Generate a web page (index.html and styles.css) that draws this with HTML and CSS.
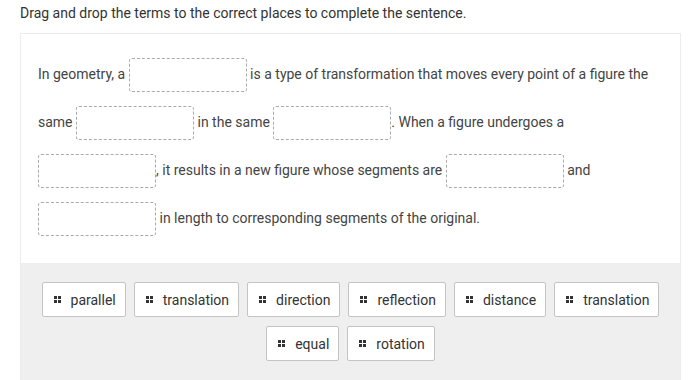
FILE: index.html
```html
<!DOCTYPE html>
<html lang="en">
<head>
  <meta charset="UTF-8" />
  <title>Drag and drop</title>
  <link rel="stylesheet" href="styles.css">
</head>
<body>
  <div class="question">
    <p class="prompt">Drag and drop the terms to the correct places to complete the sentence.</p>

    <div class="panel">
      <!-- Sentence with drop zones -->
      <p class="sentence">In geometry, a <span class="drop"></span> is a type of transformation that moves every point of a figure the same <span class="drop"></span> in the same <span class="drop"></span>. When a figure undergoes a <span class="drop"></span>, it results in a new figure whose segments are <span class="drop"></span> and <span class="drop"></span> in length to corresponding segments of the original.</p>

      <!-- Term bank -->
      <div class="bank">
        <div class="chip"><span class="grip"></span>parallel</div>
        <div class="chip"><span class="grip"></span>translation</div>
        <div class="chip"><span class="grip"></span>direction</div>
        <div class="chip"><span class="grip"></span>reflection</div>
        <div class="chip"><span class="grip"></span>distance</div>
        <div class="chip"><span class="grip"></span>translation</div>
        <div class="chip"><span class="grip"></span>equal</div>
        <div class="chip"><span class="grip"></span>rotation</div>
      </div>
    </div>
  </div>
</body>
</html>
```

FILE: styles.css
```css
body, html {
  margin: 0; padding: 0;
  font-family: 'Roboto', 'Liberation Sans', sans-serif;
  font-size: 14px;
  background: #fff;
  color: #333;
  overflow: hidden;
}
.question {
  margin-left: 20px;
  width: 661px;
}
.prompt {
  margin: 0;
  padding-top: 4px;
  line-height: 18px;
  height: 29px;
}
.panel {
  border: 1px solid #ececec;
  border-bottom: none;
}
.sentence {
  margin: 0;
  padding: 16px 17px 21px 17px;
  line-height: 48px;
  color: #444;
}
.drop {
  display: inline-block;
  width: 116px;
  height: 32px;
  border: 1px dashed #aaa;
  border-radius: 3px;
  vertical-align: middle;
  box-sizing: content-box;
}
.bank {
  background: #efefef;
  padding: 19px 10px 30px;
  display: flex;
  flex-wrap: wrap;
  justify-content: center;
  gap: 9px 8px;
}
.chip {
  display: flex;
  align-items: center;
  height: 33px;
  padding: 0 9px 0 11px;
  background: #fff;
  border: 1px solid #c4c4c4;
  border-radius: 2px;
  color: #333;
  cursor: move;
  user-select: none;
}
.grip {
  width: 7px;
  height: 7px;
  margin-right: 10px;
  background:
    linear-gradient(#333, #333) 0 0 / 3px 3px no-repeat,
    linear-gradient(#333, #333) 100% 0 / 3px 3px no-repeat,
    linear-gradient(#333, #333) 0 100% / 3px 3px no-repeat,
    linear-gradient(#333, #333) 100% 100% / 3px 3px no-repeat;
}
```
